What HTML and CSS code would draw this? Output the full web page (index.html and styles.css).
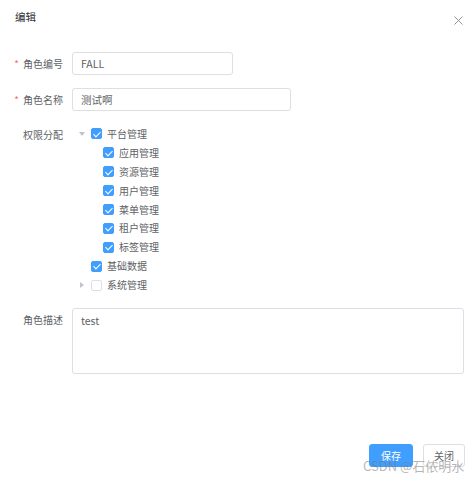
FILE: index.html
```html
<!DOCTYPE html>
<html lang="zh">
<head>
<meta charset="utf-8">
<title>编辑</title>
<link rel="stylesheet" href="styles.css">
</head>
<body>
<div class="dialog">
  <div class="header">
    <span class="title">编辑</span>
    <svg class="close" width="9" height="9" viewBox="0 0 9 9"><path d="M0.5 0.5 L8.5 8.5 M8.5 0.5 L0.5 8.5" stroke="#909399" stroke-width="1" fill="none"/></svg>
  </div>
  <div class="form">
    <div class="row">
      <label class="label"><span class="star">*</span>角色编号</label>
      <div class="input short">FALL</div>
    </div>
    <div class="row">
      <label class="label"><span class="star">*</span>角色名称</label>
      <div class="input long">测试啊</div>
    </div>
    <div class="row top">
      <label class="label tree-label">权限分配</label>
      <div class="tree">
        <div class="node"><span class="caret open"></span><span class="cb on"></span><span class="txt">平台管理</span></div>
        <div class="node lv2"><span class="caret leaf"></span><span class="cb on"></span><span class="txt">应用管理</span></div>
        <div class="node lv2"><span class="caret leaf"></span><span class="cb on"></span><span class="txt">资源管理</span></div>
        <div class="node lv2"><span class="caret leaf"></span><span class="cb on"></span><span class="txt">用户管理</span></div>
        <div class="node lv2"><span class="caret leaf"></span><span class="cb on"></span><span class="txt">菜单管理</span></div>
        <div class="node lv2"><span class="caret leaf"></span><span class="cb on"></span><span class="txt">租户管理</span></div>
        <div class="node lv2"><span class="caret leaf"></span><span class="cb on"></span><span class="txt">标签管理</span></div>
        <div class="node"><span class="caret leaf"></span><span class="cb on"></span><span class="txt">基础数据</span></div>
        <div class="node"><span class="caret"></span><span class="cb"></span><span class="txt">系统管理</span></div>
      </div>
    </div>
    <div class="row top desc">
      <label class="label area-label">角色描述</label>
      <div class="textarea">test</div>
    </div>
  </div>
  <div class="footer">
    <button class="btn primary">保存</button>
    <button class="btn">关闭</button>
  </div>
  <div class="watermark">CSDN @石侬明水</div>
</div>
</body>
</html>
```

FILE: styles.css
```css
* { box-sizing: border-box; }
html, body { margin: 0; padding: 0; background: #fff; }
body {
  font-family: "Noto Sans CJK SC", "Noto Sans", sans-serif;
  font-size: 10px;
  color: #606266;
}
.dialog { position: relative; width: 474px; height: 481px; }
.header {
  display: flex;
  justify-content: space-between;
  align-items: flex-start;
  padding: 10px 11px 0 15px;
  height: 24px;
}
.title { font-size: 10.5px; line-height: 14px; color: #303133; }
.close { margin-top: 6px; }
.form { margin-top: 28px; padding-right: 10px; }
.row { display: flex; align-items: center; margin-bottom: 13px; }
.row.top { align-items: flex-start; margin-top: 13.5px; }
.row.desc { margin-top: 12.5px; margin-bottom: 0; }
.label {
  width: 63px;
  margin-right: 9px;
  text-align: right;
  font-size: 10px;
  line-height: 23px;
  color: #606266;
}
.star { color: #f56c6c; margin-right: 4px; }
.tree-label { line-height: 19px; }
.area-label { line-height: 24px; }
.input {
  height: 23px;
  line-height: 21px;
  border: 1px solid #dcdfe6;
  border-radius: 3px;
  padding: 0 8px;
  font-size: 10.5px;
  color: #606266;
  box-shadow: 0 0 1px rgba(0,0,0,0.06);
}
.input.short { width: 161px; }
.input.long { width: 219px; }
.tree { display: flex; flex-direction: column; }
.node {
  display: flex;
  align-items: center;
  height: 18.9px;
  font-size: 10px;
  color: #606266;
}
.node.lv2 { padding-left: 12px; }
.caret {
  width: 19px;
  height: 10px;
  position: relative;
  flex: none;
}
.caret::after {
  content: "";
  position: absolute;
  left: 8px;
  top: 2px;
  border-left: 4px solid #c0c4cc;
  border-top: 3px solid transparent;
  border-bottom: 3px solid transparent;
}
.caret.open::after {
  left: 7px;
  top: 3px;
  border-top: 4px solid #c0c4cc;
  border-left: 3px solid transparent;
  border-right: 3px solid transparent;
  border-bottom: 0;
}
.caret.leaf::after { display: none; }
.cb {
  width: 11px;
  height: 11px;
  border: 1px solid #dcdfe6;
  border-radius: 2px;
  background: #fff;
  position: relative;
  flex: none;
  margin-right: 5px;
}
.cb.on { background: #409eff; border-color: #409eff; }
.cb.on::after {
  content: "";
  position: absolute;
  left: 3px;
  top: 0.5px;
  width: 3px;
  height: 6px;
  border-right: 1px solid #fff;
  border-bottom: 1px solid #fff;
  transform: rotate(45deg);
}
.txt { line-height: 14px; }
.textarea {
  flex: 1;
  height: 66px;
  border: 1px solid #dcdfe6;
  border-radius: 3px;
  padding: 4px 8px;
  font-size: 10.5px;
  line-height: 16px;
  color: #606266;
  box-shadow: 0 0 1px rgba(0,0,0,0.06);
}
.footer {
  display: flex;
  justify-content: flex-end;
  gap: 10px;
  margin-top: 70px;
  padding-right: 9px;
}
.btn {
  height: 23px;
  width: 42px;
  border: 1px solid #dcdfe6;
  border-radius: 3px;
  background: #fff;
  color: #606266;
  font-family: inherit;
  font-size: 10px;
  padding: 0;
}
.btn.primary { background: #409eff; border-color: #409eff; color: #fff; width: 44px; }
.watermark {
  position: absolute;
  left: 363px;
  top: 456px;
  font-size: 13px;
  color: rgba(120,120,120,0.55);
  white-space: nowrap;
}
```
